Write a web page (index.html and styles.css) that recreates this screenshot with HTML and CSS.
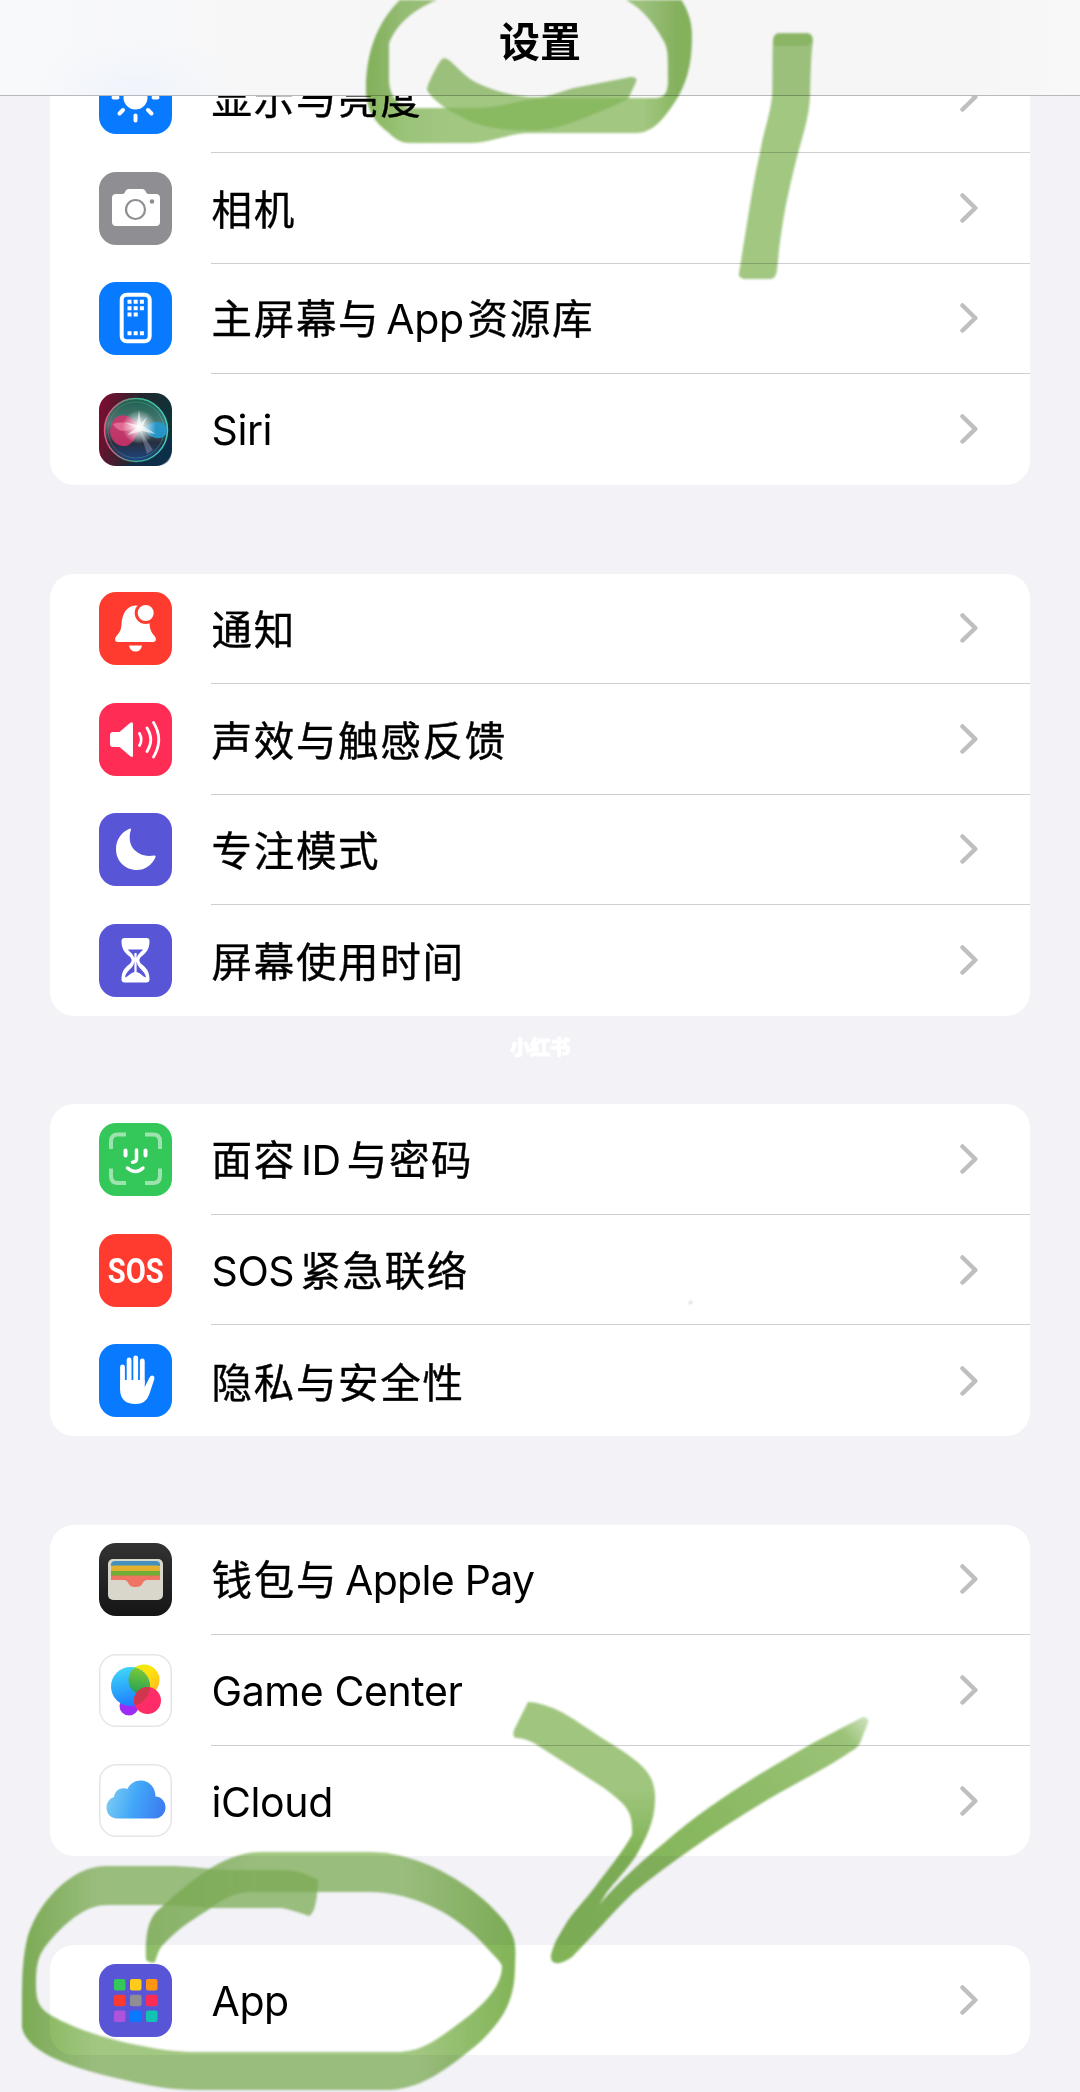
FILE: index.html
```
<!DOCTYPE html>
<html lang="zh-CN">
<head>
    <meta charset="UTF-8">
    <meta name="viewport" content="width=device-width, initial-scale=1.0">
    <title>设置</title>
    <link rel="stylesheet" href="styles.css">
</head>
<body>

<header class="navbar">
    <h1>设置</h1>
</header>

<main class="settings">
    <section class="group group-first">
        <div class="row">
            <svg class="icon" viewBox="0 0 73 73">
                <rect width="73" height="73" rx="17" fill="#077aff"/>
                <circle cx="36.5" cy="36.5" r="12" fill="#fff"/>
                <g stroke="#fff" stroke-width="4" stroke-linecap="round">
                    <path d="M36.5 13.500v5M36.500 54.500v5M14.500 36.500h4M54.500 36.500h4M20.500 20.500l3.500 3.500M49 49l3.500 3.500M20.500 52.500L24 49M49 24l3.500-3.500"/>
                </g>
            </svg>
            <div class="cell"><span class="label">显示与亮度</span><svg class="chevron" viewBox="0 0 18 30"><path d="M2.500 2.500L15.300 15 2.500 27.500"/></svg></div>
        </div>
        <div class="row">
            <svg class="icon" viewBox="0 0 73 73">
                <rect width="73" height="73" rx="17" fill="#8e8e93"/>
                <path d="M16.500 22H23q2 0 2.800-1.500l.7-1.500q1-2 3.300-2h13.400q2.300 0 3.300 2l.7 1.500q.8 1.500 2.800 1.500h7q4 0 4 4v24q0 4-4 4h-40q-4 0-4-4V26q0-4 4-4z" fill="#fff"/>
                <circle cx="36.500" cy="37.500" r="9.500" fill="none" stroke="#8e8e93" stroke-width="2.200"/>
                <circle cx="53" cy="29.500" r="2.300" fill="#8e8e93"/>
            </svg>
            <div class="cell"><span class="label">相机</span><svg class="chevron" viewBox="0 0 18 30"><path d="M2.500 2.500L15.300 15 2.500 27.500"/></svg></div>
        </div>
        <div class="row">
            <svg class="icon" viewBox="0 0 73 73">
                <rect width="73" height="73" rx="17" fill="#077aff"/>
                <rect x="22.700" y="12.700" width="28" height="46.500" rx="5" fill="none" stroke="#fff" stroke-width="4"/>
                <path d="M28.500 17.800h4v4h-4zM34.700 17.800h4v4h-4zM40.900 17.800h4v4h-4zM28.500 24.200h4v4h-4zM34.700 24.200h4v4h-4zM40.900 24.200h4v4h-4zM28.500 30.500h4v4h-4zM34.700 30.500h4v4h-4zM28.500 49.200h4v4h-4zM34.700 49.200h4v4h-4zM40.900 49.200h4v4h-4z" fill="#fff"/>
            </svg>
            <div class="cell"><span class="label">主屏幕与<span class="latin latin-app">App</span>资源库</span><svg class="chevron" viewBox="0 0 18 30"><path d="M2.500 2.500L15.300 15 2.500 27.500"/></svg></div>
        </div>
        <div class="row">
            <svg class="icon" viewBox="0 0 73 73">
                <defs>
                    <linearGradient id="siriBg" x1="0" y1=".3" x2="1" y2=".5">
                        <stop offset="0" stop-color="#7c0d30"/>
                        <stop offset=".5" stop-color="#25262e"/>
                        <stop offset="1" stop-color="#0a3538"/>
                    </linearGradient>
                    <linearGradient id="siriOrb" x1=".5" y1="0" x2=".5" y2="1">
                        <stop offset="0" stop-color="#1c5f4c"/>
                        <stop offset=".4" stop-color="#4c7a78"/>
                        <stop offset=".7" stop-color="#27303f"/>
                        <stop offset="1" stop-color="#1b4686"/>
                    </linearGradient>
                    <linearGradient id="siriRing" x1="0" y1="0" x2="1" y2="0">
                        <stop offset="0" stop-color="#e5587d"/>
                        <stop offset=".5" stop-color="#3fae8c"/>
                        <stop offset="1" stop-color="#43cfc6"/>
                    </linearGradient>
                    <radialGradient id="siriGlow">
                        <stop offset="0" stop-color="#fff"/>
                        <stop offset=".25" stop-color="#fff" stop-opacity=".8"/>
                        <stop offset="1" stop-color="#fff" stop-opacity="0"/>
                    </radialGradient>
                </defs>
                <rect width="73" height="73" rx="17" fill="url(#siriBg)"/>
                <path d="M22 73h34q17 0 17-17V44L46 66z" fill="#0d2b55" opacity=".6"/>
                <circle cx="37" cy="37" r="31.500" fill="url(#siriOrb)" stroke="url(#siriRing)" stroke-width="1.500"/>
                <circle cx="37" cy="37" r="28" fill="none" stroke="url(#siriRing)" stroke-width=".8" opacity=".5"/>
                <path d="M40 34C32 20 19 19 14 28c-7 13 0 24 10 25 8 1 14-8 16-19z" fill="#d8326c" opacity=".85"/>
                <path d="M38 34c-8-4-16-6-24-3 6 10 14 7 24 3z" fill="#f48aab" opacity=".6"/>
                <path d="M40 34c6 2 9-4 16-5 7-.5 12 3 12 8 0 6-5 9-11 8-7-1-9-7-17-11z" fill="#259bd1" opacity=".9"/>
                <path d="M40 35l14 22-6 4z" fill="#a6a9c4" opacity=".4"/>
                <circle cx="40" cy="34" r="17" fill="url(#siriGlow)"/>
                <path d="M40 17l2 13 6-6-4 9 13 8-14-3-15 4 9-7-12-6 13 3z" fill="#fff" opacity=".6"/>
            </svg>
            <div class="cell"><span class="label"><span class="latin">Siri</span></span><svg class="chevron" viewBox="0 0 18 30"><path d="M2.500 2.500L15.300 15 2.500 27.500"/></svg></div>
        </div>
    </section>

    <section class="group">
        <div class="row">
            <svg class="icon" viewBox="0 0 73 73">
                <rect width="73" height="73" rx="17" fill="#ff3b30"/>
                <path d="M36.500 13.500C27 14 23 23 22.500 32c-.3 6-1.500 8-5 12-2.500 3-1.500 6 1.500 6h35c3 0 4-3 1.500-6-3.500-4-4.700-7-5-13C50 21 44 13.500 36.500 13.500z" fill="#fff"/>
                <circle cx="46.700" cy="21" r="9.500" fill="#fff" stroke="#ff3b30" stroke-width="3"/>
                <path d="M30 53.500h13q-1 6-6.500 6t-6.500-6z" fill="#fff"/>
            </svg>
            <div class="cell"><span class="label">通知</span><svg class="chevron" viewBox="0 0 18 30"><path d="M2.500 2.500L15.300 15 2.500 27.500"/></svg></div>
        </div>
        <div class="row">
            <svg class="icon" viewBox="0 0 73 73">
                <rect width="73" height="73" rx="17" fill="#ff2d55"/>
                <path d="M14 29h6.500L31 20q3-2 3 1.500v31Q34 55 31 53L20.500 44H14q-3 0-3-3v-9q0-3 3-3z" fill="#fff"/>
                <path d="M40.500 30.500q3.500 6 0 12M48 25q7.500 11.500 0 23.500M54.500 19.500q10.500 17 0 34.500" fill="none" stroke="#fff" stroke-width="2.800" stroke-linecap="round"/>
            </svg>
            <div class="cell"><span class="label">声效与触感反馈</span><svg class="chevron" viewBox="0 0 18 30"><path d="M2.500 2.500L15.300 15 2.500 27.500"/></svg></div>
        </div>
        <div class="row">
            <svg class="icon" viewBox="0 0 73 73">
                <rect width="73" height="73" rx="17" fill="#5856d6"/>
                <path d="M32 16.500c-2.500 7-1.500 15.500 3.500 20.500s12 7 19.500 5.500q2.200-.3 1.500 1.700C53 52 46 57 38 57c-12 0-21-9-21-21 0-9 5-16.500 13-20q2.500-1 2 .5z" fill="#fff"/>
            </svg>
            <div class="cell"><span class="label">专注模式</span><svg class="chevron" viewBox="0 0 18 30"><path d="M2.500 2.500L15.300 15 2.500 27.500"/></svg></div>
        </div>
        <div class="row">
            <svg class="icon" viewBox="0 0 73 73">
                <rect width="73" height="73" rx="17" fill="#5856d6"/>
                <path d="M25.500 14h22q3 0 3 3c0 8-3 11.500-7.500 15-3.500 3-3.500 5.500 0 8.500 4.500 3.500 7.500 7 7.500 15q0 3-3 3h-22q-3 0-3-3c0-8 3-11.500 7.500-15 3.500-3 3.500-5.500 0-8.500-4.500-3.500-7.500-7-7.500-15q0-3 3-3z" fill="#fff"/>
                <path d="M29 25.500h15c-1 2-5 4-6 8h-3c-1-4-5-6-6-8z" fill="#5856d6"/>
                <path d="M35.200 38h2.600c.7 7 8.200 8 9.200 15.500-3-.5-6-5.500-10.500-5.500S29 53 26 53.500C27 46 34.500 45 35.200 38z" fill="#5856d6"/>
                <path d="M36.500 29v20" stroke="#fff" stroke-width="2.200"/>
            </svg>
            <div class="cell"><span class="label">屏幕使用时间</span><svg class="chevron" viewBox="0 0 18 30"><path d="M2.500 2.500L15.300 15 2.500 27.500"/></svg></div>
        </div>
    </section>

    <section class="group">
        <div class="row">
            <svg class="icon" viewBox="0 0 73 73">
                <rect width="73" height="73" rx="17" fill="#34c759"/>
                <path d="M12 26v-7.500q0-7 7-7h8M46 11.500h8q7 0 7 7V26M61 45.500V53q0 7-7 7h-8M27 60h-8q-7 0-7-7v-7.500" fill="none" stroke="#9ce3ae" stroke-width="4"/>
                <g fill="none" stroke="#fff" stroke-width="3.500" stroke-linecap="round">
                    <path d="M26.500 27.500v5M46.500 27.500v5" stroke-width="4"/>
                    <path d="M37.500 27v9q0 3-4 3.200M28.500 45q8 7 15.500 0"/>
                </g>
            </svg>
            <div class="cell"><span class="label">面容<span class="latin latin-id">ID</span>与密码</span><svg class="chevron" viewBox="0 0 18 30"><path d="M2.500 2.500L15.300 15 2.500 27.500"/></svg></div>
        </div>
        <div class="row">
            <svg class="icon" viewBox="0 0 73 73">
                <rect width="73" height="73" rx="17" fill="#ff3b30"/>
                <text class="sos" x="36.800" y="48.500" text-anchor="middle" textLength="56" lengthAdjust="spacingAndGlyphs">SOS</text>
            </svg>
            <div class="cell"><span class="label"><span class="latin latin-sos">SOS</span>紧急联络</span><svg class="chevron" viewBox="0 0 18 30"><path d="M2.500 2.500L15.300 15 2.500 27.500"/></svg></div>
        </div>
        <div class="row">
            <svg class="icon" viewBox="0 0 73 73">
                <rect width="73" height="73" rx="17" fill="#077aff"/>
                <path d="M23.500 23v22M30.100 16v22M36.700 14v22M43.300 17v22" stroke="#fff" stroke-width="4.800" stroke-linecap="round"/>
                <path d="M21.100 36h24.600v7l4.800-9.500q1.500-2.500 3.500-1.700t1.200 3.700l-5 15Q47 60 36.500 60 21.100 60 21.100 45z" fill="#fff"/>
            </svg>
            <div class="cell"><span class="label">隐私与安全性</span><svg class="chevron" viewBox="0 0 18 30"><path d="M2.500 2.500L15.300 15 2.500 27.500"/></svg></div>
        </div>
    </section>

    <section class="group">
        <div class="row">
            <svg class="icon" viewBox="0 0 73 73">
                <defs>
                    <linearGradient id="walletBg" x1="0" y1="0" x2="0" y2="1">
                        <stop offset="0" stop-color="#333"/>
                        <stop offset="1" stop-color="#151515"/>
                    </linearGradient>
                </defs>
                <rect width="73" height="73" rx="17" fill="url(#walletBg)"/>
                <rect x="9" y="16" width="55" height="41" rx="5" fill="#d9d7cc"/>
                <path d="M12 23v-1q0-4 4-4h41q4 0 4 4v1z" fill="#4591bd"/>
                <path d="M12 24.500q0-2 3-2h43q3 0 3 2v4H12z" fill="#e3b12d"/>
                <path d="M12 28h49v5H12z" fill="#6fad35"/>
                <path d="M12 32.500h49V37H48q-3 0-4.500 3.500t-7 3.500-7-3.500T25 37H12z" fill="#ef7461"/>
            </svg>
            <div class="cell"><span class="label">钱包与<span class="latin latin-pay">Apple Pay</span></span><svg class="chevron" viewBox="0 0 18 30"><path d="M2.500 2.500L15.300 15 2.500 27.500"/></svg></div>
        </div>
        <div class="row">
            <svg class="icon" viewBox="0 0 73 73">
                <defs>
                    <linearGradient id="gcBlue" x1=".4" y1="0" x2=".6" y2="1">
                        <stop offset="0" stop-color="#3fd5f7"/>
                        <stop offset="1" stop-color="#1a7dff"/>
                    </linearGradient>
                    <linearGradient id="gcYellow" x1="0" y1="0" x2="1" y2="1">
                        <stop offset="0" stop-color="#e6f000"/>
                        <stop offset=".5" stop-color="#ffe010"/>
                        <stop offset="1" stop-color="#ffb01e"/>
                    </linearGradient>
                    <linearGradient id="gcGreen" x1=".6" y1="0" x2=".4" y2="1">
                        <stop offset="0" stop-color="#8fd02c"/>
                        <stop offset="1" stop-color="#1fa05a"/>
                    </linearGradient>
                    <clipPath id="gcClip"><circle cx="31.500" cy="32.500" r="19.500"/></clipPath>
                </defs>
                <rect class="icon-frame" x=".75" y=".75" width="71.500" height="71.500" rx="16.500"/>
                <circle cx="30" cy="52" r="9.500" fill="#9a2cf5"/>
                <circle cx="45" cy="26" r="15.500" fill="url(#gcYellow)"/>
                <circle cx="31.500" cy="32.500" r="19.500" fill="url(#gcBlue)"/>
                <circle cx="45" cy="26" r="15.500" fill="url(#gcGreen)" clip-path="url(#gcClip)"/>
                <circle cx="48.500" cy="46.500" r="13.500" fill="#ff2d67"/>
                <circle cx="48.500" cy="46.500" r="13.500" fill="#d0374f" clip-path="url(#gcClip)"/>
            </svg>
            <div class="cell"><span class="label"><span class="latin">Game Center</span></span><svg class="chevron" viewBox="0 0 18 30"><path d="M2.500 2.500L15.300 15 2.500 27.500"/></svg></div>
        </div>
        <div class="row">
            <svg class="icon" viewBox="0 0 73 73">
                <defs>
                    <linearGradient id="cloud" x1="0" y1=".4" x2="1" y2=".6">
                        <stop offset="0" stop-color="#7ccdf3"/>
                        <stop offset=".5" stop-color="#41a5f8"/>
                        <stop offset="1" stop-color="#3d7cf0"/>
                    </linearGradient>
                </defs>
                <rect class="icon-frame" x=".75" y=".75" width="71.500" height="71.500" rx="16.500"/>
                <path d="M18.500 54.500C11 54.500 7.500 49 7.500 43.500c0-5 3-9 7.500-10.500C16 25.500 22.500 22.500 28.500 25 31 19.500 36 16.500 41.500 16.500c9 0 15 7 15 16 6 .5 10 5 10 11 0 6-4.500 11-11 11z" fill="url(#cloud)"/>
            </svg>
            <div class="cell"><span class="label"><span class="latin">iCloud</span></span><svg class="chevron" viewBox="0 0 18 30"><path d="M2.500 2.500L15.300 15 2.500 27.500"/></svg></div>
        </div>
    </section>

    <section class="group">
        <div class="row">
            <svg class="icon" viewBox="0 0 73 73">
                <rect width="73" height="73" rx="17" fill="#5856d6"/>
                <rect x="15" y="15" width="11.500" height="11.500" rx="2" fill="#34c759"/>
                <rect x="31" y="15" width="11.500" height="11.500" rx="2" fill="#ffcc1a"/>
                <rect x="47" y="15" width="11.500" height="11.500" rx="2" fill="#ff9510"/>
                <rect x="15" y="30.800" width="11.500" height="11.500" rx="2" fill="#ff3b30"/>
                <rect x="31" y="30.800" width="11.500" height="11.500" rx="2" fill="#8e8e93"/>
                <rect x="47" y="30.800" width="11.500" height="11.500" rx="2" fill="#ff2d55"/>
                <rect x="15" y="46.500" width="11.500" height="11.500" rx="2" fill="#af52de"/>
                <rect x="31" y="46.500" width="11.500" height="11.500" rx="2" fill="#077aff"/>
                <rect x="47" y="46.500" width="11.500" height="11.500" rx="2" fill="#12c3b4"/>
            </svg>
            <div class="cell"><span class="label"><span class="latin">App</span></span><svg class="chevron" viewBox="0 0 18 30"><path d="M2.500 2.500L15.300 15 2.500 27.500"/></svg></div>
        </div>
    </section>
</main>

<div class="watermark">小红书</div>

<!-- marker strokes drawn over the list -->
<svg class="marker" viewBox="0 0 1080 2092">
    <defs>
        <linearGradient id="inkRing" gradientUnits="userSpaceOnUse" x1="366" y1="20" x2="692" y2="20">
            <stop offset="0" stop-color="#82b457" stop-opacity=".97"/>
            <stop offset=".12" stop-color="#82b457" stop-opacity=".8"/>
            <stop offset=".25" stop-color="#82b457" stop-opacity=".75"/>
            <stop offset=".85" stop-color="#82b457" stop-opacity=".75"/>
            <stop offset=".96" stop-color="#82b457" stop-opacity=".95"/>
        </linearGradient>
        <linearGradient id="inkOval" gradientUnits="userSpaceOnUse" x1="22" y1="0" x2="515" y2="0">
            <stop offset="0" stop-color="#82b457"/>
            <stop offset=".15" stop-color="#82b457" stop-opacity=".75"/>
            <stop offset=".8" stop-color="#82b457" stop-opacity=".75"/>
            <stop offset="1" stop-color="#82b457"/>
        </linearGradient>
        <linearGradient id="inkTail" gradientUnits="userSpaceOnUse" x1="146" y1="0" x2="515" y2="0">
            <stop offset="0" stop-color="#82b457" stop-opacity=".9"/>
            <stop offset=".3" stop-color="#82b457" stop-opacity=".75"/>
            <stop offset=".7" stop-color="#82b457" stop-opacity=".75"/>
            <stop offset="1" stop-color="#82b457"/>
        </linearGradient>
        <linearGradient id="inkTick" gradientUnits="userSpaceOnUse" x1="0" y1="1790" x2="0" y2="1850">
            <stop offset="0" stop-color="#82b457" stop-opacity=".77"/>
            <stop offset="1" stop-color="#82b457"/>
        </linearGradient>
        <linearGradient id="inkTick2" gradientUnits="userSpaceOnUse" x1="556" y1="1960" x2="868" y2="1720">
            <stop offset="0" stop-color="#82b457"/>
            <stop offset=".5" stop-color="#82b457" stop-opacity=".95"/>
            <stop offset=".93" stop-color="#82b457" stop-opacity=".8"/>
            <stop offset="1" stop-color="#82b457" stop-opacity=".4"/>
        </linearGradient>
    </defs>
    <path fill="url(#inkRing)" d="M402-2C378 20 366 52 366 88 366 112 376 123 389 133 396 140 402 143 410 143H470C494 142 510 133 530 133H636C652 133 664 120 678 97 689 78 692 58 692 36 692 20 687 8 680-2H622C642 7 654 24 662 38 668 48 668 52 668 80 668 94 664 98 654 98H550C522 98 505 108 475 108H412C396 106 389 94 389 78V44C394 28 412 8 443-2z"/>
    <path fill="#82b457" fill-opacity=".75" d="M444 58C452 60 458 70 470 79 488 90 518 98 540 97 552 96 562 91 574 88L631 77Q638 77 636 82L628 99C606 109 566 128 540 130 520 131 490 130 470 121 450 112 434 102 427 90 427 84 438 64 441 60z"/>
    <path fill="#82b457" fill-opacity=".75" d="M779 33H808Q813 34 813 41C811 55 811 65 810 97 809 118 802 137 797 157 786 200 781 228 777 270Q776 279 770 279H744Q738 278 739 273C748 220 752 187 760 153 763 133 770 116 772 97 773 82 772 65 773 40Q774 33 779 33z"/>
    <path fill="#82b457" fill-opacity=".6" d="M779 34H808Q813 35 812 43L806 46H774L773 40Q774 34 779 34z"/>
    <path fill="url(#inkTick)" d="M528 1702C536 1702 544 1705 553 1708 573 1717 590 1731 610 1743 640 1762 654 1772 655 1795 656 1820 646 1838 636 1856 622 1876 612 1884 604 1897 593 1913 585 1940 572 1957Q562 1964 556 1963 550 1962 551 1955C554 1943 558 1937 564 1927 572 1912 585 1901 595 1887 609 1868 622 1853 632 1835 633 1812 628 1806 604 1788L534 1743C526 1739 520 1738 516 1738 513 1737 513 1734 514 1730z"/>
    <path fill="url(#inkTick2)" d="M863 1717Q870 1718 868 1723L860 1743Q858 1748 850 1752C827 1768 796 1783 767 1800 716 1831 672 1861 633 1893 611 1914 592 1937 572 1957L568 1948C576 1936 586 1921 595 1910 612 1888 638 1864 664 1843 707 1805 757 1775 813 1743z"/>
    <path fill="url(#inkOval)" d="M309 1916Q317 1912 318 1880C306 1873 295 1870 280 1870H232C212 1870 192 1866 171 1866H105C72 1866 34 1904 26 1944 22 1966 22 1980 22 2027 26 2052 70 2068 125 2080 149 2086 172 2090 196 2090H390C425 2088 452 2065 479 2043 504 2019 515 2000 515 1966H502C502 1990 478 2010 450 2030 428 2046 416 2052 395 2052H196C150 2052 84 2034 56 2018 40 2010 36 2003 36 1985 36 1958 40 1952 54 1936 72 1917 88 1905 108 1905H161C179 1905 196 1908 214 1908H282C292 1910 301 1913 309 1916z"/>
    <path fill="url(#inkTail)" d="M502 1966H515C516 1945 516 1938 505 1922 480 1890 436 1862 392 1854 382 1852 371 1852 357 1852H261C222 1852 190 1882 156 1912 147 1922 145 1940 146 1960Q151 1964 155 1962C157 1956 158 1951 162 1946 180 1926 196 1918 211 1908 223 1899 235 1892 252 1892H370C412 1892 458 1914 487 1948 496 1958 501 1962 502 1966z"/>
    <circle cx="690.500" cy="1302.500" r="1.500" fill="#ccc"/>
</svg>

</body>
</html>
```
FILE: styles.css
```
* {
    box-sizing: border-box;
}

body {
    position: relative;
    margin: 0;
    height: 2092px;
    overflow: hidden;
    background-color: #f2f2f7;
    color: #000;
    font-family: "Noto Sans CJK SC", "Inter", sans-serif;
}

.navbar {
    position: relative;
    z-index: 1;
    display: flex;
    justify-content: center;
    height: 96px;
    border-bottom: 1px solid #b9b9bc;
    background: radial-gradient(ellipse 100px 60px at 135px 96px, #eff4fc, rgba(239, 244, 252, 0)),
        linear-gradient(90deg, #f8f9fb, #f6f6f6 40%, #f6f6f6 90%, #f8f8f9);
}

.navbar h1 {
    margin: 0;
    font-size: 41px;
    font-weight: 700;
    line-height: 78px;
}

.settings {
    display: flex;
    flex-direction: column;
    gap: 88.8px;
    padding: 0 50px;
}

.group {
    border-radius: 24px;
    background-color: #fff;
}

.group-first {
    margin-top: -53.3px;
}

.row {
    display: flex;
    align-items: center;
    height: 110.5px;
    padding-left: 49px;
}

.icon {
    flex: none;
    width: 73px;
    height: 73px;
}

.icon-frame {
    fill: #fff;
    stroke: #e6e6e8;
    stroke-width: 1.5;
}

.cell {
    display: flex;
    flex: 1;
    align-items: center;
    justify-content: space-between;
    height: 100%;
    margin-left: 38.5px;
    padding: 0 52px 0 1px;
    border-bottom: 1px solid #cfcfd2;
}

.row:last-child .cell {
    border-bottom: none;
}

.label {
    font-size: 40.5px;
    line-height: 60px;
    letter-spacing: 1.7px;
    white-space: nowrap;
    -webkit-text-stroke: 0.4px #000;
}

.latin {
    font-family: "Inter", sans-serif;
    font-size: 41px;
    letter-spacing: -0.4px;
    -webkit-text-stroke: 0;
}

.latin-app {
    margin: 0 4px 0 6px;
}

.latin-id {
    margin: 0 6px 0 5px;
}

.latin-sos {
    margin-right: 6px;
}

.latin-pay {
    margin-left: 7px;
    letter-spacing: -0.7px;
}

.sos {
    fill: #fff;
    font-family: "Roboto", sans-serif;
    font-size: 35px;
    font-weight: 700;
}

.chevron {
    width: 18px;
    height: 30px;
}

.chevron path {
    fill: none;
    stroke: #bfbfc1;
    stroke-width: 4.5;
    stroke-linecap: round;
    stroke-linejoin: round;
}

.watermark {
    position: absolute;
    top: 1031px;
    left: 0;
    width: 100%;
    color: #fff;
    font-size: 20.5px;
    font-weight: 900;
    line-height: 30px;
    letter-spacing: -0.5px;
    text-align: center;
    -webkit-text-stroke: 0.8px #fff;
}

.marker {
    position: absolute;
    top: 0;
    left: 0;
    z-index: 2;
    width: 1080px;
    height: 2092px;
    mix-blend-mode: multiply;
    filter: blur(1px);
}
```
